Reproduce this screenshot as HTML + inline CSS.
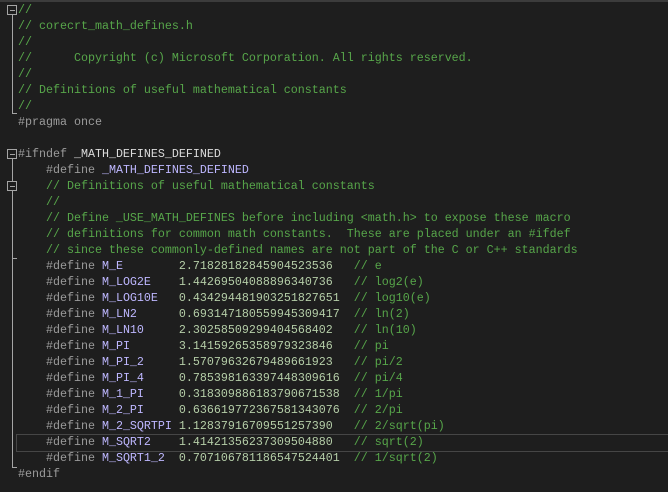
<!DOCTYPE html>
<html><head><style>
body{margin:0;width:668px;height:492px;background:#1e1e1e;overflow:hidden;position:relative;font-family:"Liberation Mono",monospace;font-size:11.67px}
.l{position:absolute;left:18px;height:16px;line-height:16px;white-space:pre;color:#dcdcdc}
.c{color:#57a64a}.p{color:#9b9b9b}.m{color:#beb7ff}.n{color:#b5cea8}.w{color:#dcdcdc}
.u{text-decoration:underline dotted #9b9b9b}
.box{position:absolute;left:7px;width:8px;height:8px;border:1px solid #a5a5a5;background:#1e1e1e}
.box:after{content:"";position:absolute;left:2px;top:4px;width:5px;height:1px;background:#a5a5a5}
.v{position:absolute;left:12px;width:1px;background:#a5a5a5}
.h{position:absolute;left:12px;width:5px;height:1px;background:#a5a5a5}
</style></head><body>
<div style="position:absolute;left:0;top:0;width:668px;height:2px;background:#3c3c3c"></div>
<div style="position:absolute;left:16px;top:434px;width:660px;height:16px;border:1px solid #464646"></div>
<div class="v" style="top:15px;height:98px"></div><div class="h" style="top:113px"></div>
<div class="v" style="top:159px;height:308px"></div><div class="h" style="top:467px"></div>
<div class="h" style="top:258px"></div>
<div class="box" style="top:5px"></div>
<div class="box" style="top:149px"></div>
<div class="box" style="top:181px"></div>
<div class="l c" style="top:2px">//</div>
<div class="l c" style="top:18px">// corecrt_math_defines.h</div>
<div class="l c" style="top:34px">//</div>
<div class="l c" style="top:50px">//      Copyright (c) Microsoft Corporation. All rights reserved.</div>
<div class="l c" style="top:66px">//</div>
<div class="l c" style="top:82px">// Definitions of useful mathematical constants</div>
<div class="l c" style="top:98px">//</div>
<div class="l p" style="top:114px">#pragma once</div>
<div class="l" style="top:146px"><span class="p">#ifndef</span> <span class="w">_MATH_DEFINES_DEFINED</span></div>
<div class="l" style="top:162px"><span class="p">    #define</span> <span class="m">_MATH_DEFINES_DEFINED</span></div>
<div class="l c" style="top:178px">    // Definitions of useful mathematical constants</div>
<div class="l c" style="top:194px">    //</div>
<div class="l c" style="top:210px">    // Define _USE_MATH_DEFINES before including &lt;math.h&gt; to expose these macro</div>
<div class="l c" style="top:226px">    // definitions for common math constants.  These are placed under an #ifdef</div>
<div class="l c" style="top:242px">    // since these commonly-defined names are not part of the C or C++ standards</div>
<div class="l" style="top:258px"><span class="p">    #define</span> <span class="m">M_E       </span> <span class="n">2.71828182845904523536</span>   <span class="c">// e</span></div>
<div class="l" style="top:274px"><span class="p">    #define</span> <span class="m">M_LOG2E   </span> <span class="n">1.44269504088896340736</span>   <span class="c">// log2(e)</span></div>
<div class="l" style="top:290px"><span class="p">    #define</span> <span class="m">M_LOG10E  </span> <span class="n">0.434294481903251827651</span>  <span class="c">// log10(e)</span></div>
<div class="l" style="top:306px"><span class="p">    #define</span> <span class="m">M_LN2     </span> <span class="n">0.693147180559945309417</span>  <span class="c">// ln(2)</span></div>
<div class="l" style="top:322px"><span class="p">    #define</span> <span class="m">M_LN10    </span> <span class="n">2.30258509299404568402</span>   <span class="c">// ln(10)</span></div>
<div class="l" style="top:338px"><span class="p">    #define</span> <span class="m">M_PI      </span> <span class="n">3.14159265358979323846</span>   <span class="c">// pi</span></div>
<div class="l" style="top:354px"><span class="p">    #define</span> <span class="m">M_PI_2    </span> <span class="n">1.57079632679489661923</span>   <span class="c">// pi/2</span></div>
<div class="l" style="top:370px"><span class="p">    #define</span> <span class="m">M_PI_4    </span> <span class="n">0.785398163397448309616</span>  <span class="c">// pi/4</span></div>
<div class="l" style="top:386px"><span class="p">    #define</span> <span class="m">M_1_PI    </span> <span class="n">0.318309886183790671538</span>  <span class="c">// 1/pi</span></div>
<div class="l" style="top:402px"><span class="p">    #define</span> <span class="m">M_2_PI    </span> <span class="n">0.636619772367581343076</span>  <span class="c">// 2/pi</span></div>
<div class="l" style="top:418px"><span class="p">    #define</span> <span class="m">M_2_SQRTPI</span> <span class="n">1.12837916709551257390</span>   <span class="c">// 2/sqrt(pi)</span></div>
<div class="l" style="top:434px"><span class="p">    #define</span> <span class="m">M_SQRT2   </span> <span class="n">1.41421356237309504880</span>   <span class="c">// sqrt(2)</span></div>
<div class="l" style="top:450px"><span class="p">    #define</span> <span class="m">M_SQRT1_2 </span> <span class="n">0.707106781186547524401</span>  <span class="c">// 1/sqrt(2)</span></div>
<div class="l p" style="top:466px">#endif</div>
</body></html>
